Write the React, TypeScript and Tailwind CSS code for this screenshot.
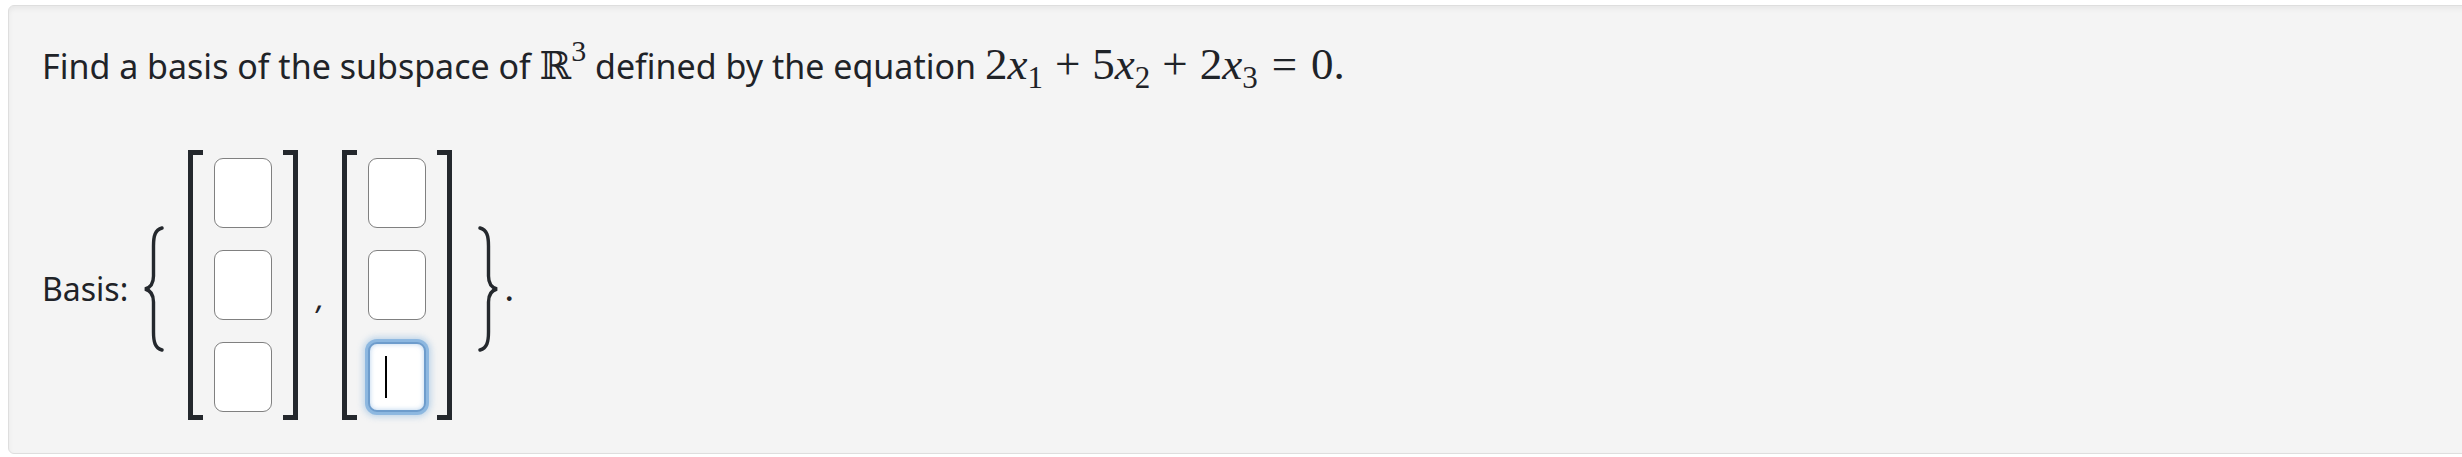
import React from 'react';

// curly brace drawn as a stroke, flipped for the closing one
function Brace({ right = false }: { right?: boolean }) {
  return (
    <svg
      width="24"
      height="126"
      viewBox="0 0 24 126"
      className={right ? '-scale-x-100' : ''}
      fill="none"
      stroke="#24282d"
      strokeWidth="3.4"
      strokeLinecap="round"
    >
      <path d="M20,2 C13,4 11.5,10 11.5,20 L11.5,50 C11.5,57 9,61.5 3,63 C9,64.5 11.5,69 11.5,76 L11.5,106 C11.5,116 13,122 20,124" />
    </svg>
  );
}

function Cell({ focused = false }: { focused?: boolean }) {
  if (focused) {
    return (
      <div className="w-[58px] h-[70px] rounded-[9px] bg-white border-2 border-[#6d9ccc] shadow-[0_0_0_3px_rgba(122,172,220,0.75),0_0_6px_5px_rgba(122,172,220,0.45),inset_0_0_5px_rgba(122,172,220,0.55)] flex items-center pl-[15px]">
        <div className="w-[2px] h-[42px] bg-black" />
      </div>
    );
  }
  return <div className="w-[58px] h-[70px] rounded-[9px] bg-white border-[1.5px] border-[#808080]" />;
}

function Vector({ focusLast = false }: { focusLast?: boolean }) {
  return (
    <div className="flex items-stretch">
      <div className="w-[15px] h-[270px] border-l-[5px] border-t-[5px] border-b-[5px] border-[#24282d]" />
      <div className="flex flex-col gap-[22px] py-[8px] px-[11px]">
        <Cell />
        <Cell />
        <Cell focused={focusLast} />
      </div>
      <div className="w-[15px] h-[270px] border-r-[5px] border-t-[5px] border-b-[5px] border-[#24282d]" />
    </div>
  );
}

export default function App() {
  return (
    <div className="w-[2462px] h-[457px] overflow-hidden bg-white">
      <div className="ml-[8px] mt-[5px] w-[2470px] h-[449px] bg-[#f4f4f4] border border-[#dedede] rounded-[6px] shadow-[inset_0_3px_5px_rgba(0,0,0,0.05)] pl-[33px] pt-[40px] text-[#1f2328] font-['Noto_Sans',sans-serif]">
        <p className="text-[34px] leading-[40px] whitespace-nowrap">
          Find a basis of the subspace of{' '}
          <span className="font-['DejaVu_Serif',serif] text-[38px] leading-[0]">ℝ</span>
          <sup className="font-['Liberation_Serif',serif] text-[30px] leading-[0] top-[-0.6em]">3</sup>{' '}
          defined by the equation{' '}
          <span className="font-['Liberation_Serif',serif] text-[45px] leading-[0]">
            2<i>x</i>
            <sub className="text-[31px] bottom-[-0.3em]">1</sub>
            <span className="mx-[12px]">+</span>5<i>x</i>
            <sub className="text-[31px] bottom-[-0.3em]">2</sub>
            <span className="mx-[12px]">+</span>2<i>x</i>
            <sub className="text-[31px] bottom-[-0.3em]">3</sub>
            <span className="mx-[14px]">=</span>0.
          </span>
        </p>

        <div className="mt-[64px] flex items-center">
          <span className="text-[32px] leading-[40px] mt-[8px]">Basis:</span>
          <div className="ml-[14px] mt-[8px]">
            <Brace />
          </div>
          <div className="ml-[22px]">
            <Vector />
          </div>
          <span className="w-[44px] text-center italic text-[30px] mt-[24px] font-['Noto_Sans',sans-serif]">,</span>
          <Vector focusLast />
          <div className="ml-[24px] mt-[8px]">
            <Brace right />
          </div>
          <span className="ml-[4px] mt-[6px] font-['Liberation_Serif',serif] text-[40px] leading-[40px]">.</span>
        </div>
      </div>
    </div>
  );
}
